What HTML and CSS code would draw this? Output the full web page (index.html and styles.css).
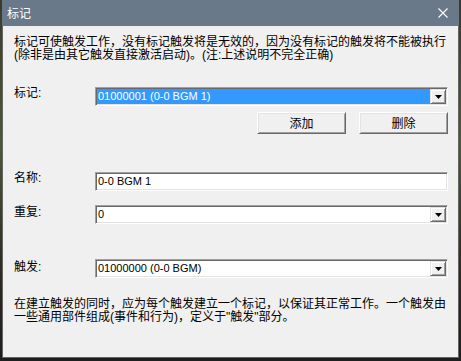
FILE: index.html
```html
<!DOCTYPE html>
<html lang="zh-CN">
<head>
<meta charset="utf-8">
<title>标记</title>
<link rel="stylesheet" href="styles.css">
</head>
<body>
<div class="desk">
  <div class="win">
    <div class="titlebar">
      <span class="title">标记</span>
      <svg class="close" width="10" height="10" viewBox="0 0 10 10"><path d="M0.5 0.5 L9.5 9.5 M9.5 0.5 L0.5 9.5" stroke="#ffffff" stroke-width="1.1" fill="none"/></svg>
    </div>
    <div class="body">
      <p class="note top">标记可使触发工作，没有标记触发将是无效的，因为没有标记的触发将不能被执行<br>(除非是由其它触发直接激活启动)。(注:上述说明不完全正确)</p>

      <div class="row first">
        <span class="label">标记:</span>
        <div class="combo">
          <div class="value selected">01000001 (0-0 BGM 1)</div>
          <div class="arrow"><svg width="7" height="4" viewBox="0 0 7 4"><polygon points="0,0 7,0 3.5,4" fill="#000"/></svg></div>
        </div>
      </div>

      <div class="buttons">
        <div class="btn">添加</div>
        <div class="btn">删除</div>
      </div>

      <div class="row name">
        <span class="label">名称:</span>
        <div class="input">0-0 BGM 1</div>
      </div>

      <div class="row repeat">
        <span class="label">重复:</span>
        <div class="combo">
          <div class="value">0</div>
          <div class="arrow"><svg width="7" height="4" viewBox="0 0 7 4"><polygon points="0,0 7,0 3.5,4" fill="#000"/></svg></div>
        </div>
      </div>

      <div class="row trigger">
        <span class="label">触发:</span>
        <div class="combo">
          <div class="value">01000000 (0-0 BGM)</div>
          <div class="arrow"><svg width="7" height="4" viewBox="0 0 7 4"><polygon points="0,0 7,0 3.5,4" fill="#000"/></svg></div>
        </div>
      </div>

      <p class="note bottom">在建立触发的同时，应为每个触发建立一个标记，以保证其正常工作。一个触发由<br>一些通用部件组成(事件和行为)，定义于"触发"部分。</p>
    </div>
  </div>
</div>
</body>
</html>
```

FILE: styles.css
```css
html, body {
  margin: 0;
  padding: 0;
}
body {
  width: 461px;
  height: 361px;
  overflow: hidden;
  font-family: "Liberation Sans", "Noto Sans CJK SC", sans-serif;
  color: #000;
}
.desk {
  width: 461px;
  height: 361px;
  box-sizing: border-box;
  padding: 0 2px 3px 2px;
  background: linear-gradient(180deg, #3c3a2a 0%, #4a5a33 40%, #2f2a22 75%, #1e1e1e 100%);
}
.win {
  height: 100%;
  display: flex;
  flex-direction: column;
}
.titlebar {
  height: 26px;
  flex: none;
  background: #697989;
  display: flex;
  align-items: center;
  justify-content: space-between;
  padding: 0 11px 0 5px;
}
.title {
  color: #fff;
  font-family: "Noto Sans CJK SC", sans-serif;
  font-size: 12px;
  line-height: 12px;
}
.close {
  display: block;
}
.body {
  flex: 1;
  background: #f0f0f0;
  border: 1px solid #646464;
  border-top: none;
  padding-left: 11px;
}
.note {
  margin: 0;
  font-size: 12px;
  line-height: 13px;
  white-space: nowrap;
}
.note.top {
  margin-top: 10px;
}
.note.bottom {
  margin-top: 20px;
}
.row {
  display: grid;
  grid-template-columns: 81px 353px;
  align-items: start;
}
.row.first { margin-top: 25px; }
.row.name { margin-top: 38px; }
.row.repeat { margin-top: 14px; }
.row.trigger { margin-top: 35px; }
.label {
  font-size: 12px;
  line-height: 12px;
  margin-top: 0;
}
.row.repeat .label { margin-top: 1px; }
.row.trigger .label { margin-top: 2px; }
.combo, .input {
  height: 19px;
  box-sizing: border-box;
  border-style: solid;
  border-width: 1px;
  border-color: #a0a0a0 #ffffff #ffffff #a0a0a0;
  box-shadow: inset 1px 1px 0 #696969, inset -1px -1px 0 #e3e3e3;
  background: #fff;
  font-size: 11px;
}
.combo {
  display: flex;
  padding: 1px 1px 1px 1px;
}
.value {
  flex: 1;
  padding-left: 1px;
  line-height: 15px;
  height: 15px;
  white-space: nowrap;
}
.value.selected {
  background: #3399ff;
  color: #fff;
}
.arrow {
  width: 16px;
  height: 15px;
  box-sizing: border-box;
  background: #f0f0f0;
  border-style: solid;
  border-width: 1px;
  border-color: #e3e3e3 #696969 #696969 #e3e3e3;
  box-shadow: inset 1px 1px 0 #ffffff, inset -1px -1px 0 #a0a0a0;
  display: flex;
  align-items: center;
  justify-content: center;
}
.arrow svg {
  display: block;
}
.input {
  padding-left: 2px;
  line-height: 15px;
  padding-top: 1px;
}
.buttons {
  width: 434px;
  display: flex;
  justify-content: flex-end;
  gap: 13px;
  margin-top: 6px;
}
.btn {
  width: 89px;
  height: 22px;
  box-sizing: border-box;
  background: #f0f0f0;
  border-style: solid;
  border-width: 1px;
  border-color: #ffffff #696969 #696969 #ffffff;
  box-shadow: inset 1px 1px 0 #e3e3e3, inset -1px -1px 0 #a0a0a0;
  display: flex;
  align-items: center;
  justify-content: center;
  font-family: "Noto Sans CJK SC", sans-serif;
  font-size: 12px;
  line-height: 12px;
}
```
